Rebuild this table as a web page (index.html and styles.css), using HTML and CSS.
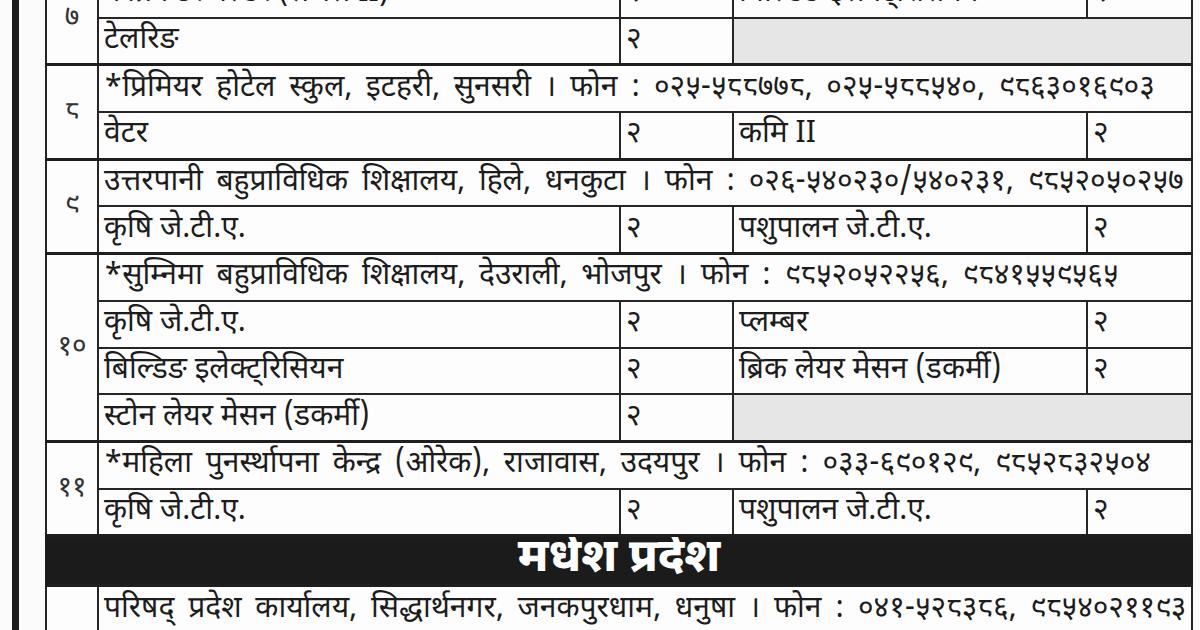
FILE: index.html
```html
<!DOCTYPE html>
<html lang="ne">
<head>
<meta charset="utf-8">
<title>तालिका</title>
<link rel="stylesheet" href="styles.css">
</head>
<body>
<div class="page">
  <div class="rule"></div>
  <div class="sheet">
    <table class="grid">
      <colgroup>
        <col class="c-sn"><col class="c-name"><col class="c-num"><col class="c-name2"><col class="c-num2">
      </colgroup>
      <tbody class="group">
        <tr><td class="sn" rowspan="2">७</td><td>फेब्रिकेटर वेल्डर (लेभल II)</td><td>२</td><td>बिल्डिङ इलेक्ट्रिसियन</td><td>२</td></tr>
        <tr><td>टेलरिङ</td><td>२</td><td class="blank" colspan="2"></td></tr>
      </tbody>
      <tbody class="group">
        <tr><td class="sn" rowspan="2">८</td><td class="head" colspan="4">*प्रिमियर होटेल स्कुल, इटहरी, सुनसरी । फोन : ०२५-५८८७७८, ०२५-५८८५४०, ९८६३०१६९०३</td></tr>
        <tr><td>वेटर</td><td>२</td><td>कमि II</td><td>२</td></tr>
      </tbody>
      <tbody class="group">
        <tr><td class="sn" rowspan="2">९</td><td class="head" colspan="4">उत्तरपानी बहुप्राविधिक शिक्षालय, हिले, धनकुटा । फोन : ०२६-५४०२३०/५४०२३१, ९८५२०५०२५७</td></tr>
        <tr><td>कृषि जे.टी.ए.</td><td>२</td><td>पशुपालन जे.टी.ए.</td><td>२</td></tr>
      </tbody>
      <tbody class="group">
        <tr><td class="sn" rowspan="4">१०</td><td class="head" colspan="4">*सुम्निमा बहुप्राविधिक शिक्षालय, देउराली, भोजपुर । फोन : ९८५२०५२२५६, ९८४१५५९५६५</td></tr>
        <tr><td>कृषि जे.टी.ए.</td><td>२</td><td>प्लम्बर</td><td>२</td></tr>
        <tr><td>बिल्डिङ इलेक्ट्रिसियन</td><td>२</td><td>ब्रिक लेयर मेसन (डकर्मी)</td><td>२</td></tr>
        <tr><td>स्टोन लेयर मेसन (डकर्मी)</td><td>२</td><td class="blank" colspan="2"></td></tr>
      </tbody>
      <tbody class="group">
        <tr><td class="sn" rowspan="2">११</td><td class="head" colspan="4">*महिला पुनर्स्थापना केन्द्र (ओरेक), राजावास, उदयपुर । फोन : ०३३-६९०१२९, ९८५२८३२५०४</td></tr>
        <tr><td>कृषि जे.टी.ए.</td><td>२</td><td>पशुपालन जे.टी.ए.</td><td>२</td></tr>
      </tbody>
      <tbody class="group">
        <tr><th class="band" colspan="5">मधेश प्रदेश</th></tr>
      </tbody>
      <tbody class="group">
        <tr><td class="sn"></td><td class="head" colspan="4">परिषद् प्रदेश कार्यालय, सिद्धार्थनगर, जनकपुरधाम, धनुषा । फोन : ०४१-५२८३८६, ९८५४०२११९३</td></tr>
      </tbody>
    </table>
  </div>
</div>
</body>
</html>
```

FILE: styles.css
```css
html, body {
  margin: 0;
  padding: 0;
  background: #fbfbfb;
}
body {
  width: 1200px;
  height: 630px;
  overflow: hidden;
  font-family: "Noto Sans Devanagari", "Lohit Devanagari", "Mukta", "Noto Sans", "DejaVu Sans", sans-serif;
  color: #1c1c1c;
}
.page {
  display: flex;
  align-items: flex-start;
  height: 630px;
  overflow: hidden;
}
.rule {
  flex: 0 0 7px;
  height: 630px;
  margin-left: 12px;
  background: #1c1c1c;
}
.sheet {
  margin-left: 26px;
  margin-top: -31px;
}
.grid {
  width: 1146px;
  border-collapse: collapse;
  table-layout: fixed;
  background: #fdfdfd;
}
.c-sn { width: 52px; }
.c-name { width: 522px; }
.c-num { width: 113px; }
.c-name2 { width: 354px; }
.c-num2 { width: 105px; }
.grid td, .grid th {
  border: 2px solid #262626;
  height: 44.7px;
  padding: 0 5px;
  font-size: 30px;
  line-height: 44px;
  white-space: nowrap;
  overflow: hidden;
  vertical-align: middle;
  text-align: left;
}
.grid .group {
  border-top: 3px solid #1e1e1e;
}
.grid td.sn {
  text-align: center;
  padding: 0;
  font-size: 28px;
  color: #333;
}
.grid td.head {
  word-spacing: 6px;
}
.grid td.blank {
  background: #e6e6e6;
}
.grid th.band {
  background: #1b1b1b;
  color: #ffffff;
  text-align: center;
  font-size: 46px;
  font-weight: 800;
  height: 47px;
  line-height: 47px;
  border-color: #1b1b1b;
}
```
